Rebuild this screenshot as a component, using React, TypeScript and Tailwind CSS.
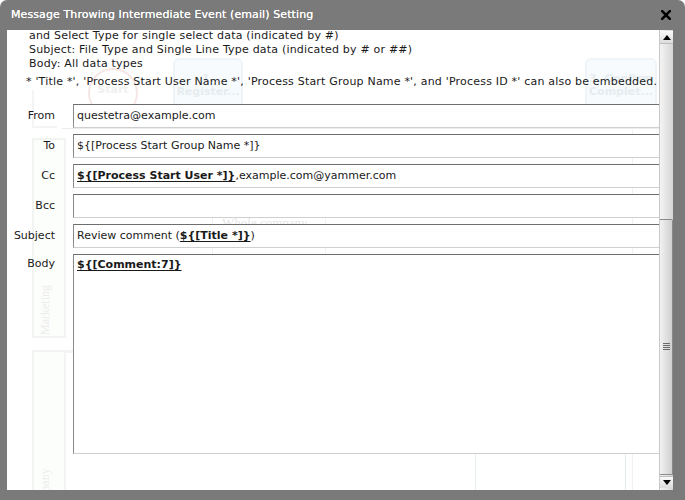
import React from "react";

const font = { fontFamily: '"DejaVu Sans", Verdana, sans-serif' };

function Field({
  label,
  children,
  tall,
}: {
  label: string;
  children?: React.ReactNode;
  tall?: boolean;
}) {
  return (
    <div className="flex">
      <div
        className={`w-[48px] shrink-0 text-right text-[11px] leading-[14px] text-[#1a1a1a] ${
          tall ? "pt-[3px]" : "pt-[5px]"
        }`}
      >
        {label}
      </div>
      <div
        className={`ml-[18px] flex-1 -mr-[6px] bg-white border-t border-t-[#6e6e6e] border-l border-l-[#8a8a8a] border-b border-b-[#cfcfcf] border-r border-r-[#8a8a8a] px-[3px] text-[11px] leading-[14px] text-[#1a1a1a] ${
          tall ? "h-[200px] pt-[3px]" : "h-[24px] pt-[4px]"
        }`}
      >
        {children}
      </div>
    </div>
  );
}

function Token({ children }: { children: React.ReactNode }) {
  return <span className="font-bold underline underline-offset-2">{children}</span>;
}

function Diagram() {
  return (
    <div className="pointer-events-none absolute inset-0" style={{ fontFamily: '"Liberation Serif", serif' }}>
      {/* lane boxes */}
      <div className="absolute left-[25px] top-[60px] h-[38px] w-[25px] border-l-2 border-b-2 border-[#f4f4f4]" />
      <div className="absolute left-[25px] top-[108px] h-[200px] w-[34px] border-2 border-[#f2f4f2] bg-[#fcfefc]" />
      <div className="absolute left-[25px] top-[320px] h-[160px] w-[34px] border-2 border-[#f2f4f2] bg-[#fcfefc]" />
      <div className="absolute left-[59px] top-[320px] h-[3px] w-[600px] bg-[#f4f4f4]" />
      <div className="absolute left-[29px] top-[305px] origin-top-left -rotate-90 text-[12px] text-[#ececec]">Marketing</div>
      <div className="absolute left-[29px] top-[485px] origin-top-left -rotate-90 text-[12px] text-[#ececec]">Company</div>
      {/* start circle */}
      <div className="absolute left-[81px] top-[38px] h-[50px] w-[50px] rounded-full border-2 border-[#f6e6e6] text-center text-[11px] font-bold leading-[40px] text-[#f0f0f0]" style={font}>
        Start
      </div>
      {/* register box */}
      <div className="absolute left-[166px] top-[28px] h-[56px] w-[70px] rounded-[6px] border-2 border-[#eef4f8] bg-[#f7fbfd] pt-[12px] text-center text-[11px] font-bold leading-[13px] text-[#e6ecef]" style={font}>
        1.
        <br />
        Register...
      </div>
      {/* confirm box */}
      <div className="absolute left-[578px] top-[28px] h-[56px] w-[72px] rounded-[6px] border-2 border-[#eef4f8] bg-[#f7fbfd] pt-[12px] text-center text-[11px] font-bold leading-[13px] text-[#e6ecef]" style={font}>
        3. Confirm
        <br />
        Complet...
      </div>
      {/* grid lines */}
      <div className="absolute left-[55px] top-[98px] h-[1px] w-[600px] bg-[#ececec]" />
      <div className="absolute left-[205px] top-[180px] h-[1px] w-[350px] bg-[#eef3ee]" />
      <div className="absolute left-[205px] top-[180px] h-[140px] w-[1px] bg-[#eef3ee]" />
      <div className="absolute left-[318px] top-[180px] h-[140px] w-[1px] bg-[#eef3ee]" />
      <div className="absolute left-[625px] top-[98px] h-[380px] w-[1px] bg-[#eef3ee]" />
      <div className="absolute left-[215px] top-[183px] text-[13px] text-[#e6e6e6]">Whole company</div>
      <div className="absolute left-[468px] top-[423px] h-[40px] w-[1px] bg-[#e6efe6]" />
      <div className="absolute left-[618px] top-[423px] h-[40px] w-[1px] bg-[#e6efe6]" />
    </div>
  );
}

function Scrollbar() {
  return (
    <div className="flex w-[14px] shrink-0 flex-col bg-gradient-to-r from-[#f4f4f4] to-[#d6d6d6] border-l border-[#c8c8c8]">
      <div className="mt-[1px] flex h-[13px] items-center justify-center border-b border-[#bdbdbd] bg-gradient-to-b from-[#fafafa] to-[#dcdcdc]">
        <svg width="8" height="5" viewBox="0 0 8 5">
          <path d="M0 5 L4 0 L8 5 Z" fill="#000" />
        </svg>
      </div>
      <div className="h-[175px]" />
      <div className="flex flex-1 items-center justify-center rounded-tr-[2px] border border-[#8a8a8a] border-l-0 bg-gradient-to-r from-[#f2f2f2] to-[#d0d0d0]">
        <svg width="7" height="8" viewBox="0 0 7 8">
          <rect x="0" y="0" width="7" height="1" fill="#6a6a6a" />
          <rect x="0" y="2" width="7" height="1" fill="#6a6a6a" />
          <rect x="0" y="4" width="7" height="1" fill="#6a6a6a" />
          <rect x="0" y="6" width="7" height="1" fill="#6a6a6a" />
        </svg>
      </div>
      <div className="mt-[1px] flex h-[12px] items-center justify-center border-t border-[#bdbdbd] bg-gradient-to-b from-[#fafafa] to-[#dcdcdc]">
        <svg width="8" height="5" viewBox="0 0 8 5">
          <path d="M0 0 L8 0 L4 5 Z" fill="#000" />
        </svg>
      </div>
      <div className="h-[2px]" />
    </div>
  );
}

export default function App() {
  return (
    <div className="h-[500px] w-[685px] overflow-hidden bg-white" style={font}>
      <div className="flex h-[500px] w-[685px] flex-col rounded-t-[7px] bg-[#7a7a7a]">
        <div className="flex h-[30px] shrink-0 items-center justify-between pl-[11px] pr-[14px] pt-[1px]">
          <span className="text-[11px] tracking-[0.1px] text-white [text-shadow:0_0_0.4px_#fff]">
            Message Throwing Intermediate Event (email) Setting
          </span>
          <svg width="10" height="10" viewBox="0 0 10 10" className="mb-[1px]">
            <path d="M1.2 1.2 L8.8 8.8 M8.8 1.2 L1.2 8.8" stroke="#000" strokeWidth="2.6" strokeLinecap="square" />
          </svg>
        </div>
        <div className="ml-[7px] mr-[12px] flex h-[460px] shrink-0">
          <div className="relative flex-1 overflow-hidden bg-white">
            <Diagram />
            <div className="relative -mt-[1px]">
              <div className="pl-[22px] text-[11px] leading-[14px] tracking-[0.2px] text-[#1a1a1a]">
                <div>and Select Type for single select data (indicated by #)</div>
                <div>Subject: File Type and Single Line Type data (indicated by # or ##)</div>
                <div>Body: All data types</div>
              </div>
              <div className="mt-[4px] pl-[19px] text-[11px] leading-[14px] tracking-[0.2px] text-[#1a1a1a] whitespace-nowrap">
                * 'Title *', 'Process Start User Name *', 'Process Start Group Name *', and 'Process ID *' can also be embedded.
              </div>
              <div className="mt-[15px] flex flex-col gap-[6px]">
                <Field label="From">questetra@example.com</Field>
                <Field label="To">{"${[Process Start Group Name *]}"}</Field>
                <Field label="Cc">
                  <Token>{"${[Process Start User *]}"}</Token>,example.com@yammer.com
                </Field>
                <Field label="Bcc" />
                <Field label="Subject">
                  Review comment (<Token>{"${[Title *]}"}</Token>)
                </Field>
                <Field label="Body" tall>
                  <Token>{"${[Comment:7]}"}</Token>
                </Field>
              </div>
            </div>
          </div>
          <Scrollbar />
        </div>
      </div>
    </div>
  );
}
